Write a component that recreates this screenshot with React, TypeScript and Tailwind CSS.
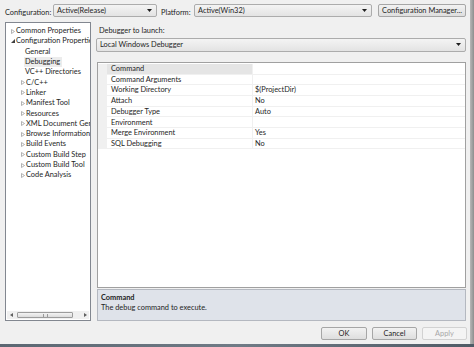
import React from "react";

const font = { fontFamily: 'Lato, "Open Sans", "Liberation Sans", sans-serif' };

const treeItems: { label: string; level: number; glyph?: "closed" | "open"; selected?: boolean }[] = [
  { label: "Common Properties", level: 0, glyph: "closed" },
  { label: "Configuration Properties", level: 0, glyph: "open" },
  { label: "General", level: 1 },
  { label: "Debugging", level: 1, selected: true },
  { label: "VC++ Directories", level: 1 },
  { label: "C/C++", level: 1, glyph: "closed" },
  { label: "Linker", level: 1, glyph: "closed" },
  { label: "Manifest Tool", level: 1, glyph: "closed" },
  { label: "Resources", level: 1, glyph: "closed" },
  { label: "XML Document Generator", level: 1, glyph: "closed" },
  { label: "Browse Information", level: 1, glyph: "closed" },
  { label: "Build Events", level: 1, glyph: "closed" },
  { label: "Custom Build Step", level: 1, glyph: "closed" },
  { label: "Custom Build Tool", level: 1, glyph: "closed" },
  { label: "Code Analysis", level: 1, glyph: "closed" },
];

const props: [string, string][] = [
  ["Command", ""],
  ["Command Arguments", ""],
  ["Working Directory", "$(ProjectDir)"],
  ["Attach", "No"],
  ["Debugger Type", "Auto"],
  ["Environment", ""],
  ["Merge Environment", "Yes"],
  ["SQL Debugging", "No"],
];

const Arrow = () => (
  <svg width="5" height="3" viewBox="0 0 5 3" className="shrink-0">
    <path d="M0 0h5L2.5 3z" fill="#1e1e1e" />
  </svg>
);

const Combo: React.FC<{ text: string; className: string }> = ({ text, className }) => (
  <div
    className={`flex items-center justify-between border border-[#acacac] rounded-[2px] bg-gradient-to-b from-[#f4f4f4] to-[#e3e3e3] pl-[3px] pr-[4px] ${className}`}
  >
    <span className="text-[#1e1e1e] leading-none whitespace-nowrap">{text}</span>
    <Arrow />
  </div>
);

const Button: React.FC<{ text: string; disabled?: boolean; className?: string }> = ({ text, disabled, className }) => (
  <div
    className={`flex items-center justify-center rounded-[2px] border leading-none whitespace-nowrap ${
      disabled
        ? "border-[#d2d2d2] bg-[#f4f4f4] text-[#a8a8a8]"
        : "border-[#a6a6a6] bg-gradient-to-b from-[#f2f2f2] to-[#dedede] text-[#1e1e1e]"
    } ${className ?? ""}`}
  >
    {text}
  </div>
);

const Glyph: React.FC<{ kind?: "closed" | "open" }> = ({ kind }) => (
  <span className="w-[5px] flex justify-center shrink-0">
    {kind === "closed" && (
      <svg width="4" height="5" viewBox="0 0 4 5">
        <path d="M0.5 0.5L3.5 2.5L0.5 4.5z" fill="none" stroke="#a0a0a0" strokeWidth="0.8" />
      </svg>
    )}
    {kind === "open" && (
      <svg width="4" height="4" viewBox="0 0 4 4">
        <path d="M4 0V4H0z" fill="#404040" />
      </svg>
    )}
  </span>
);

export default function App() {
  return (
    <div style={font} className="w-[474px] h-[347px] flex flex-col text-[7.4px] text-[#1e1e1e] overflow-hidden">
      <div className="flex flex-1 min-h-0">
        <div className="w-[470px] bg-[#f0f0f0] flex flex-col">
          {/* top bar */}
          <div className="h-[22px] flex items-start pt-[4px] pl-[5px]">
            <span className="mt-[3px] w-[48px]">Configuration:</span>
            <Combo text="Active(Release)" className="w-[104px] h-[13px]" />
            <span className="mt-[3px] ml-[4px] w-[33px]">Platform:</span>
            <Combo text="Active(Win32)" className="w-[178px] h-[13px]" />
            <Button text="Configuration Manager..." className="ml-[6px] w-[88px] h-[13px]" />
          </div>

          {/* body */}
          <div className="flex h-[299px] pl-[5px]">
            {/* tree */}
            <div className="w-[86px] h-[299px] border border-[#828790] bg-white flex flex-col">
              <div className="flex-1 pt-[3px] overflow-hidden">
                {treeItems.map((t) => (
                  <div
                    key={t.label}
                    className="h-[10.3px] flex items-center whitespace-nowrap overflow-hidden"
                    style={{ paddingLeft: t.level === 0 ? 4 : 14 }}
                  >
                    <Glyph kind={t.glyph} />
                    <span
                      className={`pl-[1px] pr-[2px] leading-[10px] ${t.selected ? "bg-[#ececec]" : ""} ${
                        t.level === 1 && !t.glyph ? "-ml-[1px]" : ""
                      }`}
                    >
                      {t.label}
                    </span>
                  </div>
                ))}
              </div>
              {/* horizontal scrollbar */}
              <div className="h-[8px] mb-[1px] mx-[1px] flex items-center bg-[#f0f0f0]">
                <div className="w-[8px] flex justify-center">
                  <svg width="3" height="4" viewBox="0 0 3 4">
                    <path d="M3 0V4L0 2z" fill="#606060" />
                  </svg>
                </div>
                <div className="flex-1 h-[6px] relative">
                  <div className="absolute left-[2px] w-[56px] h-[6px] rounded-[1px] border border-[#9c9c9c] bg-gradient-to-b from-[#f4f4f4] to-[#dcdcdc] flex items-center justify-center">
                    <div className="w-[5px] h-[3px] border-x border-[#9a9a9a]" />
                  </div>
                </div>
                <div className="w-[8px] flex justify-center">
                  <svg width="3" height="4" viewBox="0 0 3 4">
                    <path d="M0 0V4L3 2z" fill="#606060" />
                  </svg>
                </div>
              </div>
            </div>

            {/* right panel */}
            <div className="ml-[5px] w-[370px] flex flex-col">
              <div className="h-[15px] flex items-end pl-[3px] pb-[1px]">Debugger to launch:</div>
              <Combo text="Local Windows Debugger" className="mt-[1px] w-[370px] h-[14px] !pl-[3px]" />

              <div className="mt-[10px] ml-[1px] w-[369px] h-[228px] border border-[#a0a0a0] bg-white flex flex-col">
                <div className="pt-[1px]">
                  {props.map(([name, value], i) => (
                    <div key={name} className="h-[10.7px] flex">
                      <div className="w-[9px] bg-[#f0f0f0]" />
                      <div
                        className={`w-[145px] pl-[4px] flex items-center border-b border-[#f0f0f0] ${
                          i === 0 ? "bg-[#e5e5e5]" : ""
                        }`}
                      >
                        {name}
                      </div>
                      <div className="flex-1 pl-[2px] flex items-center border-b border-l border-[#f0f0f0]">
                        {value}
                      </div>
                    </div>
                  ))}
                </div>
              </div>

              <div className="mt-[1px] ml-[1px] w-[369px] h-[32px] border border-[#b4b8c0] bg-[#dfe3ea] px-[3px] pt-[3px] leading-[10px]">
                <div className="font-bold">Command</div>
                <div>The debug command to execute.</div>
              </div>
            </div>
          </div>

          {/* buttons */}
          <div className="flex justify-end pr-[3px] pt-[6px] gap-[5px]">
            <Button text="OK" className="w-[46px] h-[13px]" />
            <Button text="Cancel" className="w-[45px] h-[13px]" />
            <Button text="Apply" disabled className="w-[45px] h-[13px]" />
          </div>
        </div>
        <div className="w-[4px] bg-gradient-to-r from-[#b8b8b8] to-[#8e8e8e]" />
      </div>
      <div className="h-[3px] bg-gradient-to-r from-[#5b6772] via-[#707b86] to-[#4f5b66]" />
    </div>
  );
}
